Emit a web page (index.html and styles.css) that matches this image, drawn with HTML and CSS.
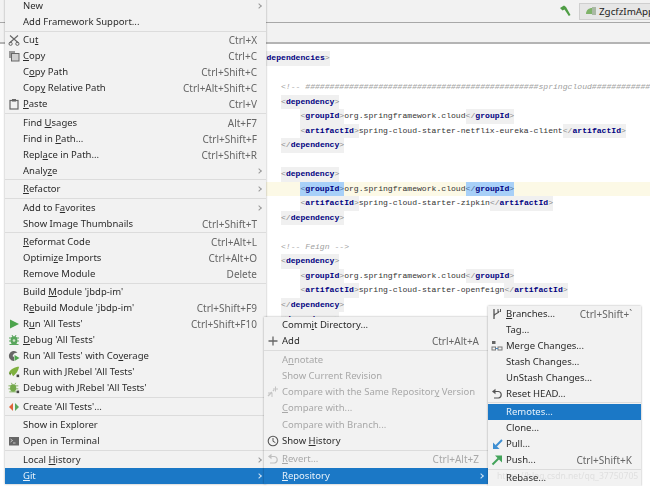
FILE: index.html
```html
<!DOCTYPE html>
<html lang="en">
<head>
<meta charset="utf-8">
<title>Git Remotes menu</title>
<link rel="stylesheet" href="styles.css">
</head>
<body>
<div class="app">
  <header class="toolbar">
    <svg class="hammer" viewBox="0 0 14 14" width="14" height="14"><path d="M2 4 L6 1.5 L8 3 L12.5 11 L10.8 12 L6.5 5.5 L4.5 6.5 Z" fill="#4f9d45"/></svg>
    <div class="runconf">
      <svg class="confico" viewBox="0 0 12 12" width="12" height="12"><path d="M1 9 C1 5 4 3 7 3 L7 9 Z" fill="#7fb36a"/><rect x="7" y="2" width="4" height="8" fill="#a9b8a4"/></svg>
      <span>ZgcfzImApp</span>
    </div>
  </header>
  <div class="tabbar"></div>
  <div class="workspace">
    <aside class="tree"></aside>
    <main class="editor">
      <div class="ln"><span class="t">&lt;<b>dependencies</b>&gt;</span></div>
      <div class="ln"></div>
      <div class="ln c i1">&lt;!-- ################################################springcloud################</div>
      <div class="ln i1"><span class="t">&lt;<b>dependency</b>&gt;</span></div>
      <div class="ln i2"><span class="t">&lt;<b>groupId</b>&gt;</span>org.springframework.cloud<span class="t">&lt;/<b>groupId</b>&gt;</span></div>
      <div class="ln i2"><span class="t">&lt;<b>artifactId</b>&gt;</span>spring-cloud-starter-netflix-eureka-client<span class="t">&lt;/<b>artifactId</b>&gt;</span></div>
      <div class="ln i1"><span class="t">&lt;/<b>dependency</b>&gt;</span></div>
      <div class="ln"></div>
      <div class="ln i1"><span class="t">&lt;<b>dependency</b>&gt;</span></div>
      <div class="ln i2 cur"><span class="t hl">&lt;<b>groupId</b>&gt;</span>org.springframework.cloud<span class="t hl">&lt;/<b>groupId</b>&gt;</span></div>
      <div class="ln i2"><span class="t">&lt;<b>artifactId</b>&gt;</span>spring-cloud-starter-zipkin<span class="t">&lt;/<b>artifactId</b>&gt;</span></div>
      <div class="ln i1"><span class="t">&lt;/<b>dependency</b>&gt;</span></div>
      <div class="ln"></div>
      <div class="ln c i1">&lt;!-- Feign --&gt;</div>
      <div class="ln i1"><span class="t">&lt;<b>dependency</b>&gt;</span></div>
      <div class="ln i2"><span class="t">&lt;<b>groupId</b>&gt;</span>org.springframework.cloud<span class="t">&lt;/<b>groupId</b>&gt;</span></div>
      <div class="ln i2"><span class="t">&lt;<b>artifactId</b>&gt;</span>spring-cloud-starter-openfeign<span class="t">&lt;/<b>artifactId</b>&gt;</span></div>
      <div class="ln i1"><span class="t">&lt;/<b>dependency</b>&gt;</span></div>
      <div class="ln i1"><span class="t">&lt;<b>dependency</b>&gt;</span></div>
    </main>
  </div>

  <nav class="menu menu-main">
    <div class="it"><i></i><span class="l">New</span><em></em></div>
    <div class="it"><i></i><span class="l">Add Framework Support...</span></div>
    <hr>
    <div class="it"><i><svg viewBox="0 0 12 12"><path d="M2 1.5 L10.5 9 M10 1.5 L1.5 9" stroke="#666" stroke-width="1.1" fill="none"/><circle cx="2.6" cy="9.8" r="1.6" fill="none" stroke="#666"/><circle cx="9.4" cy="9.8" r="1.6" fill="none" stroke="#666"/></svg></i><span class="l">Cu<u>t</u></span><kbd>Ctrl+X</kbd></div>
    <div class="it"><i><svg viewBox="0 0 12 12"><path d="M1 1 H7 V3 H3 V8 H1 Z" fill="#9a9a9a"/><rect x="3.5" y="3.5" width="7.5" height="7.5" fill="#cfcfcf" stroke="#666"/></svg></i><span class="l"><u>C</u>opy</span><kbd>Ctrl+C</kbd></div>
    <div class="it"><i></i><span class="l">C<u>o</u>py Path</span><kbd>Ctrl+Shift+C</kbd></div>
    <div class="it"><i></i><span class="l">Cop<u>y</u> Relative Path</span><kbd>Ctrl+Alt+Shift+C</kbd></div>
    <div class="it"><i><svg viewBox="0 0 12 12"><rect x="2" y="2.5" width="8" height="8.5" fill="none" stroke="#666" stroke-width="1.2"/><rect x="4" y="1" width="4" height="2.5" fill="#666"/></svg></i><span class="l"><u>P</u>aste</span><kbd>Ctrl+V</kbd></div>
    <hr>
    <div class="it"><i></i><span class="l">Find <u>U</u>sages</span><kbd>Alt+F7</kbd></div>
    <div class="it"><i></i><span class="l">Find in <u>P</u>ath...</span><kbd>Ctrl+Shift+F</kbd></div>
    <div class="it"><i></i><span class="l">Repl<u>a</u>ce in Path...</span><kbd>Ctrl+Shift+R</kbd></div>
    <div class="it"><i></i><span class="l">Analy<u>z</u>e</span><em></em></div>
    <hr>
    <div class="it"><i></i><span class="l"><u>R</u>efactor</span><em></em></div>
    <hr>
    <div class="it"><i></i><span class="l">Add to F<u>a</u>vorites</span><em></em></div>
    <div class="it"><i></i><span class="l">Show Image Thumbnails</span><kbd>Ctrl+Shift+T</kbd></div>
    <hr>
    <div class="it"><i></i><span class="l"><u>R</u>eformat Code</span><kbd>Ctrl+Alt+L</kbd></div>
    <div class="it"><i></i><span class="l">Optimi<u>z</u>e Imports</span><kbd>Ctrl+Alt+O</kbd></div>
    <div class="it"><i></i><span class="l">Remove Module</span><kbd>Delete</kbd></div>
    <hr>
    <div class="it"><i></i><span class="l">Build <u>M</u>odule 'jbdp-im'</span></div>
    <div class="it"><i></i><span class="l">R<u>e</u>build Module 'jbdp-im'</span><kbd>Ctrl+Shift+F9</kbd></div>
    <div class="it"><i><svg viewBox="0 0 12 12"><path d="M2 1.5 L11 6 L2 10.5 Z" fill="#4da54d"/></svg></i><span class="l">R<u>u</u>n 'All Tests'</span><kbd>Ctrl+Shift+F10</kbd></div>
    <div class="it"><i><svg viewBox="0 0 12 12"><ellipse cx="6" cy="6.5" rx="3.4" ry="4.2" fill="#58a55c"/><path d="M1 4 H11 M1 7 H11 M1.5 10.5 H10.5 M4 1 L5 3 M8 1 L7 3" stroke="#58a55c" fill="none"/><circle cx="6" cy="6.5" r="1.3" fill="#cfe3c8"/></svg></i><span class="l"><u>D</u>ebug 'All Tests'</span></div>
    <div class="it"><i><svg viewBox="0 0 12 12"><path d="M9.5 2.5 A5 5 0 1 0 6 11 L6 7 L4.5 6 L6 3.5 Z" fill="#666"/><path d="M6.5 5 L11.5 8 L6.5 11 Z" fill="#4da54d"/></svg></i><span class="l">Run 'All Tests' with Co<u>v</u>erage</span></div>
    <div class="it"><i><svg viewBox="0 0 14 14"><path d="M13 1 C8 1 3 4 1 8 L4 8.5 L6 12 C9 10 12 6 13 1 Z" fill="#7fb13f"/><path d="M1 8 L4 8.5 L2.5 11 Z" fill="#557f2a"/><rect x="10" y="10" width="3" height="3" fill="#444"/></svg></i><span class="l">Run with JRebel 'All Tests'</span></div>
    <div class="it"><i><svg viewBox="0 0 14 14"><ellipse cx="6" cy="7" rx="3.6" ry="4.4" fill="#74a94c"/><path d="M0.5 4.5 H12 M0.5 8 H12 M1.5 11.5 H10 M4 1 L5 3 M9 1 L8 3" stroke="#74a94c" fill="none"/><rect x="10" y="10" width="3" height="3" fill="#444"/></svg></i><span class="l">Debug with JRebel 'All Tests'</span></div>
    <hr>
    <div class="it"><i><svg viewBox="0 0 12 12"><path d="M5 2 V10 L1 6 Z" fill="#e0653a"/><path d="M7 2 V10 L11 6 Z" fill="#5aa65a"/></svg></i><span class="l">Create 'All Tests'...</span></div>
    <hr>
    <div class="it"><i></i><span class="l">Show in Explorer</span></div>
    <div class="it"><i><svg viewBox="0 0 12 12"><rect x="1" y="2" width="10" height="8.5" fill="#666"/><path d="M2.5 4 L4.5 5.5 L2.5 7 M5 8 H7.5" stroke="#eee" stroke-width=".7" fill="none"/></svg></i><span class="l">Open in Terminal</span></div>
    <hr>
    <div class="it"><i></i><span class="l">Local <u>H</u>istory</span><em></em></div>
    <div class="it on"><i></i><span class="l"><u>G</u>it</span><em></em></div>
  </nav>

  <nav class="menu menu-git">
    <div class="it"><i></i><span class="l">Comm<u>i</u>t Directory...</span></div>
    <div class="it"><i><svg viewBox="0 0 12 12"><path d="M6 1.5 V10.5 M1.5 6 H10.5" stroke="#666" stroke-width="1.3"/></svg></i><span class="l">Add</span><kbd>Ctrl+Alt+A</kbd></div>
    <hr>
    <div class="it off"><i></i><span class="l">A<u>n</u>notate</span></div>
    <div class="it off"><i></i><span class="l">Show Current Revision</span></div>
    <div class="it off"><i><svg viewBox="0 0 12 12"><path d="M1 10 L5 6 M6 5 L7 4" stroke="#c4c4c4" stroke-width="1.4"/><path d="M8.5 0.5 V5.5 M6 3 H11" stroke="#c4c4c4"/><path d="M1 7 H5 V11" stroke="#c4c4c4" fill="none"/></svg></i><span class="l">Compare with the Same Repositor<u>y</u> Version</span></div>
    <div class="it off"><i></i><span class="l"><u>C</u>ompare with...</span></div>
    <div class="it off"><i></i><span class="l">Compare with Branch...</span></div>
    <div class="it"><i><svg viewBox="0 0 12 12"><circle cx="6" cy="6" r="4.8" fill="none" stroke="#555" stroke-width="1.1"/><path d="M6 3 V6.3 L8.4 7.6" fill="none" stroke="#555"/></svg></i><span class="l">Show <u>H</u>istory</span></div>
    <hr>
    <div class="it off"><i><svg viewBox="0 0 12 12"><path d="M3 3.5 H7.5 A3.3 3.3 0 0 1 7.5 10 H3" fill="none" stroke="#c0c0c0" stroke-width="1.2"/><path d="M4.5 0.8 V6.2 L1 3.5 Z" fill="#c0c0c0"/></svg></i><span class="l"><u>R</u>evert...</span><kbd>Ctrl+Alt+Z</kbd></div>
    <div class="it on"><i></i><span class="l"><u>R</u>epository</span><em></em></div>
  </nav>

  <nav class="menu menu-repo">
    <div class="it"><i><svg viewBox="0 0 12 12"><path d="M3 1 V11 M3 8 C3 5 8 6 8 3" fill="none" stroke="#555" stroke-width="1.3"/><path d="M7 1 V4 M9.5 1 V4" stroke="#555"/></svg></i><span class="l"><u>B</u>ranches...</span><kbd>Ctrl+Shift+`</kbd></div>
    <div class="it"><i></i><span class="l">Tag...</span></div>
    <div class="it"><i><svg viewBox="0 0 12 12"><rect x="1" y="1" width="3.5" height="3" fill="#666"/><rect x="1" y="7" width="3.5" height="3" fill="none" stroke="#777"/><rect x="7" y="7" width="4" height="3" fill="none" stroke="#777"/><path d="M4.5 8.5 H7" stroke="#4c86b8"/></svg></i><span class="l">Merge Changes...</span></div>
    <div class="it"><i></i><span class="l">Stash Changes...</span></div>
    <div class="it"><i></i><span class="l">UnStash Changes...</span></div>
    <div class="it"><i><svg viewBox="0 0 12 12"><path d="M3 3.5 H7.5 A3.3 3.3 0 0 1 7.5 10 H3" fill="none" stroke="#555" stroke-width="1.2"/><path d="M4.5 0.8 V6.2 L1 3.5 Z" fill="#555"/></svg></i><span class="l">Reset HEAD...</span></div>
    <hr>
    <div class="it on"><i></i><span class="l">Remotes...</span></div>
    <div class="it"><i></i><span class="l">Clone...</span></div>
    <div class="it"><i><svg viewBox="0 0 12 12"><path d="M11 2 L5 8" stroke="#3f8fd2" stroke-width="2"/><path d="M2 4.5 V11 H8.5 Z" fill="#3f8fd2"/></svg></i><span class="l">Pull...</span></div>
    <div class="it"><i><svg viewBox="0 0 12 12"><path d="M1.5 10.5 L7.5 4.5" stroke="#43a35a" stroke-width="2"/><path d="M4 1.5 H11 V8.5 Z" fill="#43a35a"/></svg></i><span class="l">Push...</span><kbd>Ctrl+Shift+K</kbd></div>
    <hr>
    <div class="it"><i></i><span class="l">Rebase...</span></div>
  </nav>
  <div class="mark">https://blog.csdn.net/qq_37750705</div>
</div>
</body>
</html>
```
FILE: styles.css
```css
* { box-sizing: border-box; }
html, body { margin: 0; padding: 0; background: #fff; }
.app {
  position: relative;
  width: 650px;
  height: 486px;
  overflow: hidden;
  display: flex;
  flex-direction: column;
  filter: blur(0.35px);
  font-family: "Noto Sans", "Open Sans", sans-serif;
}
.toolbar {
  height: 23px;
  flex: none;
  background: #f2f2f2;
  border-bottom: 1px solid #a8a8a8;
  display: flex;
  justify-content: flex-end;
  align-items: center;
  gap: 7px;
  overflow: hidden;
}
.runconf {
  width: 71px;
  height: 17px;
  flex: none;
  background: #e6e6e6;
  border: 1px solid #cfcfcf;
  border-right: 0;
  display: flex;
  align-items: center;
  gap: 2px;
  padding-left: 5px;
  font-size: 9.8px;
  color: #222;
  white-space: nowrap;
  overflow: hidden;
}
.hammer, .confico { flex: none; }
.tabbar {
  height: 21px;
  flex: none;
  background: #f2f2f2;
  border-bottom: 2px solid #b4b4b4;
}
.workspace { flex: 1; display: flex; min-height: 0; }
.tree { width: 261.6px; flex: none; background: #fff; }
.editor {
  flex: 1;
  min-width: 0;
  padding-top: 7.4px;
  background: #fff;
  font: 8.1px/14.5px "Liberation Mono", "DejaVu Sans Mono", monospace;
  color: #333;
  overflow: hidden;
}
.ln { height: 14.5px; white-space: nowrap; }
.i1 { padding-left: 4ch; }
.i2 { padding-left: 8ch; }
.c { color: #a0a0a0; font-style: italic; }
.cur { background: #fcf9e6; }
.t { display: inline-block; height: 14.5px; background: #f0f0f0; color: #8a8a8a; }
.t b { color: #000080; font-weight: 700; }
.t.hl { background: #a8d0f8; color: #4a6f9a; }

.menu {
  position: absolute;
  background: #f2f2f2;
  font-size: 10px;
  line-height: 16px;
  color: #2b2b2b;
  box-shadow: 0 0 2px rgba(0, 0, 0, .35);
}
.menu-main { left: 5px; top: -2.2px; width: 261px; }
.menu-git { left: 264px; top: 317px; width: 224px; }
.menu-repo { left: 488px; top: 305.5px; width: 153px; }
.it {
  height: 16px;
  display: flex;
  align-items: center;
  white-space: nowrap;
  padding-right: 9px;
}
.menu-git .it { height: 16.2px; }
.it i { width: 18px; flex: none; display: flex; justify-content: center; }
.it i svg { width: 12px; height: 12px; }
.it .l { flex: 1; font-size: 9.5px; }
.it kbd { font: inherit; color: #666; }
.it em {
  width: 4px;
  height: 4px;
  margin-right: -4px;
  border-top: 1px solid #999;
  border-right: 1px solid #999;
  transform: rotate(45deg);
}
.it.off { color: #a8a8a8; }
.it.off kbd { color: #a8a8a8; }
.it.on { background: #1b78c6; color: #e8f2fa; }
.it.on em { border-color: #cfe3f4; }
.menu hr {
  height: 1.74px;
  margin: .7px 0 0;
  border: 0;
  border-top: 1px solid #dcdcdc;
}
.mark {
  position: absolute;
  left: 497px;
  top: 470px;
  font-size: 8.6px;
  color: rgba(160, 160, 160, .22);
  white-space: nowrap;
}
```
